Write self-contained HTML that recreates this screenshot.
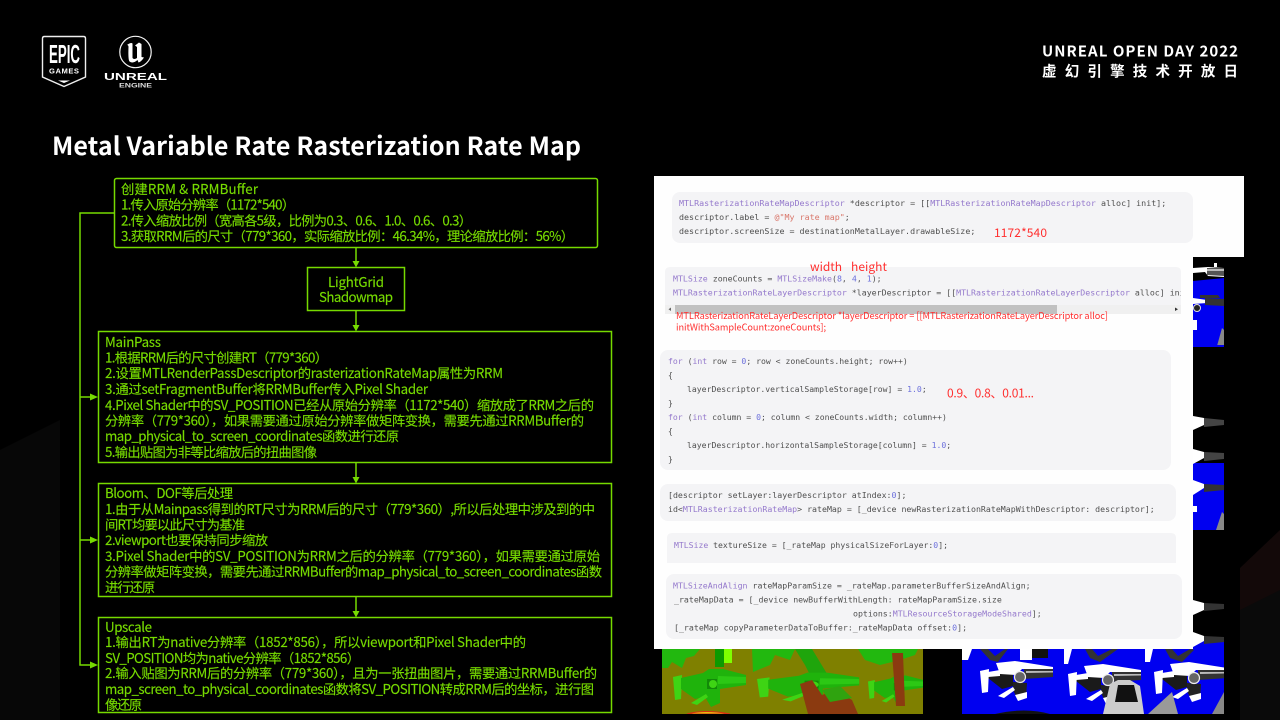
<!DOCTYPE html>
<html><head><meta charset="utf-8"><style>
html,body{margin:0;padding:0;background:#000;width:1280px;height:720px;overflow:hidden}
svg{display:block}
.g text{font-family:"Noto Sans CJK SC","Liberation Sans",sans-serif;font-size:13.3px;fill:#76da00;stroke:#76da00;stroke-width:.15px}
.c text{font-family:"DejaVu Sans Mono","Liberation Mono",monospace;fill:#4f4f4f;white-space:pre}
.p{fill:#9478cc}.n{fill:#6c70dc}.s{fill:#d9776b}
.r text{font-family:"Noto Sans CJK SC","Liberation Sans",sans-serif;fill:#ff2f2f}
</style></head><body>
<svg xmlns="http://www.w3.org/2000/svg" width="1280" height="720" viewBox="0 0 1280 720">
<defs>
<g id="ga">
<path d="M0 10L9 8L8 32L2 33Z" fill="#3ed414"/>
<path d="M8 11L30 6L36 2L50 2L73 8V18L47 22L47 36L38 40L32 30L22 32L8 22Z" fill="#1fb30c"/>
<path d="M45 9L73 10V16L45 17Z" fill="#2cc814"/>
<path d="M34 12H44V22H34Z" fill="#128a08"/>
<circle cx="40" cy="17" r="4" fill="#3ed414"/>
<path d="M18 36L33 27L35 30L24 38Z" fill="#3ed414"/>
</g>
<g id="gb">
<path d="M8 13L33 12L33 26L22 29L8 18Z" fill="#1a1a1a"/>
<path d="M0 11L9 9L8 32L2 33Z" fill="#fff"/>
<path d="M8 12L20 10V16L8 17Z" fill="#fff"/>
<path d="M16 3L35 1L73 7V10L42 9L36 15L20 14Z" fill="#fff"/>
<path d="M44 9L73 9V17L44 19Z" fill="#333"/>
<path d="M46 11L73 11V12.500L46 13Z" fill="#bbb"/>
<path d="M33 22L47 23L46 38L38 40L33 30Z" fill="#222"/>
<path d="M35 35L47 32V38L38 41Z" fill="#fff"/>
<circle cx="40" cy="17" r="5.500" fill="#666" stroke="#eee" stroke-width="1.200"/>
<path d="M18 36L33 27L35 30L24 38Z" fill="#fff"/>
</g>
</defs>
<rect width="1280" height="720" fill="#000"/>
<path d="M0 450L60 420V720H0Z" fill="#070707"/>
<path d="M1240 568L1280 530V720H1240Z" fill="#130909"/>
<path d="M1240 610L1280 590V720H1240Z" fill="#0a0a0a"/>

<!-- Epic logo -->
<path d="M44.500 36.500H83.500Q85.500 36.500 85.500 38.500V77L64 86.500L42.500 77V38.500Q42.500 36.500 44.500 36.500Z" fill="none" stroke="#eee" stroke-width="1.400"/>
<text x="49" y="63" font-family="Liberation Sans,sans-serif" font-weight="700" font-size="26" fill="#fff" textLength="31" lengthAdjust="spacingAndGlyphs">EPIC</text>
<text x="49" y="73.500" font-family="Liberation Sans,sans-serif" font-weight="700" font-size="7.600" fill="#fff" textLength="30">GAMES</text>
<path d="M58 80.500H70L64 83Z" fill="#fff"/>
<!-- Unreal logo -->
<circle cx="135.500" cy="52" r="15.700" fill="none" stroke="#f4f4f4" stroke-width="1.200"/>
<path d="M127 45Q131 42 132.500 43.500V58Q134 60 137 58V47L135 45.500L139 42.500L141.500 44V57L144 57.500Q141 62 138.500 62.500L137.500 60Q133 64 129.500 61.500Q128 60 128.500 47Q128.500 45 127 45Z" fill="#fff"/>
<text x="104" y="80" font-family="Liberation Sans,sans-serif" font-weight="700" font-size="10" fill="#fff" textLength="63" lengthAdjust="spacingAndGlyphs">UNREAL</text>
<text x="119" y="87.500" font-family="Liberation Sans,sans-serif" font-weight="700" font-size="6.500" fill="#ddd" textLength="33" lengthAdjust="spacingAndGlyphs">ENGINE</text>

<!-- Header right -->
<text x="1042" y="56.500" font-family="Noto Sans CJK SC,Liberation Sans,sans-serif" font-weight="700" font-size="15" fill="#fff" textLength="196">UNREAL OPEN DAY 2022</text>
<text x="1042" y="76.500" font-family="Noto Sans CJK SC,sans-serif" font-weight="700" font-size="14.500" fill="#fff" textLength="196">虚幻引擎技术开放日</text>

<!-- Title -->
<text x="52" y="155" font-family="Noto Sans CJK SC,Liberation Sans,sans-serif" font-weight="700" font-size="25" fill="#fff" textLength="529">Metal Variable Rate Rasterization Rate Map</text>

<!-- Flow connectors -->
<g fill="none" stroke="#76da00" stroke-width="1.500">
<rect x="114.500" y="178.500" width="483" height="69" rx="2"/>
<rect x="307.500" y="267.500" width="97" height="43"/>
<rect x="98.500" y="331.500" width="513" height="131"/>
<rect x="98.500" y="483.500" width="513" height="113"/>
<rect x="98.500" y="617.500" width="513" height="95"/>
<path d="M114 213H80V665H92M80 397H92M80 540H92M356 248V262M356 311V326M356 463V478M356 597V612"/>
</g>
<g fill="#76da00">
<path d="M352.500 261H359.500L356 267.500Z"/><path d="M352.500 325H359.500L356 331.500Z"/><path d="M352.500 477H359.500L356 483.500Z"/><path d="M352.500 611H359.500L356 617.500Z"/>
<path d="M90 393.500V400.500L98 397Z"/><path d="M90 536.500V543.500L98 540Z"/><path d="M90 661.500V668.500L98 665Z"/>
</g>
<g class="g">
<text x="121" y="194" textLength="137">创建RRM &amp; RRMBuffer</text>
<text x="121" y="209.500" textLength="174">1.传入原始分辨率（1172*540）</text>
<text x="121" y="225.500" textLength="351">2.传入缩放比例（宽高各5级，比例为0.3、0.6、1.0、0.6、0.3）</text>
<text x="121" y="241" textLength="453">3.获取RRM后的尺寸（779*360，实际缩放比例：46.34%，理论缩放比例：56%）</text>
<text x="328" y="287" textLength="56">LightGrid</text>
<text x="319" y="302" textLength="74">Shadowmap</text>

<text x="105" y="347" textLength="56">MainPass</text>
<text x="105" y="362.500" textLength="223">1.根据RRM后的尺寸创建RT（779*360）</text>
<text x="105" y="378" textLength="398">2.设置MTLRenderPassDescriptor的rasterizationRateMap属性为RRM</text>
<text x="105" y="394" textLength="323">3.通过setFragmentBuffer将RRMBuffer传入Pixel Shader</text>
<text x="105" y="410" textLength="489">4.Pixel Shader中的SV_POSITION已经从原始分辨率（1172*540）缩放成了RRM之后的</text>
<text x="105" y="425.500" textLength="479">分辨率（779*360），如果需要通过原始分辨率做矩阵变换，需要先通过RRMBuffer的</text>
<text x="105" y="441" textLength="294">map_physical_to_screen_coordinates函数进行还原</text>
<text x="105" y="457" textLength="212">5.输出贴图为非等比缩放后的扭曲图像</text>

<text x="105" y="498" textLength="128">Bloom、DOF等后处理</text>
<text x="105" y="514" textLength="490">1.由于从Mainpass得到的RT尺寸为RRM后的尺寸（779*360）,所以后处理中涉及到的中</text>
<text x="105" y="529.500" textLength="140">间RT均要以此尺寸为基准</text>
<text x="105" y="545" textLength="163">2.viewport也要保持同步缩放</text>
<text x="105" y="561" textLength="495">3.Pixel Shader中的SV_POSITION为RRM之后的分辨率（779*360），如果需要通过原始</text>
<text x="105" y="576.500" textLength="497">分辨率做矩阵变换，需要先通过RRMBuffer的map_physical_to_screen_coordinates函数</text>
<text x="105" y="592" textLength="50">进行还原</text>

<text x="105" y="632" textLength="47">Upscale</text>
<text x="105" y="647" textLength="421">1.输出RT为native分辨率（1852*856），所以viewport和Pixel Shader中的</text>
<text x="105" y="663" textLength="255">SV_POSITION均为native分辨率（1852*856）</text>
<text x="105" y="678" textLength="492">2.输入贴图为RRM后的分辨率（779*360），且为一张扭曲图片，需要通过RRMBuffer的</text>
<text x="105" y="694" textLength="489">map_screen_to_physical_coordinates函数将SV_POSITION转成RRM后的坐标，进行图</text>
<text x="105" y="709.500" textLength="37">像还原</text>
</g>

<!-- Background images: green -->
<svg x="662" y="640" width="261" height="74" viewBox="662 640 261 74">
<rect x="662" y="640" width="261" height="74" fill="#7f8000"/>
<path d="M662 649H700L694 656L686 658L682 668L672 662L668 668L662 668Z" fill="#22b80f"/>
<rect x="715" y="649" width="17" height="14" fill="#7fff00"/><rect x="715" y="649" width="9" height="18" fill="#0c9a00"/>
<path d="M752 649H795L790 660L775 655L770 665L753 672Z" fill="#22b80f"/>
<path d="M795 649H812L832 682L815 685L805 665Z" fill="#1fa50c"/>
<path d="M858 649H918L915 655L900 660L880 665L865 660Z" fill="#22b80f"/>
<use href="#ga" transform="translate(673 667)"/>
<use href="#ga" transform="translate(757 671) scale(1.400 .8)"/>
<use href="#ga" transform="translate(868 674) scale(.76 .75)"/>
<path d="M892 653L903 653L905 706L896 706Z" fill="#8b3a10"/>
<path d="M800 684L812 680L822 695L835 690L852 700L858 714H808Z" fill="#8b3a10"/>
<path d="M822 690L840 686L852 698L830 702Z" fill="#2fa30f"/>
<path d="M687 714Q705 709 730 714Z" fill="#e6c010" stroke="#d83010"/>
</svg>
<!-- Background images: blue -->
<svg x="962" y="640" width="262" height="74" viewBox="962 640 262 74">
<rect x="962" y="640" width="262" height="74" fill="#0000f0"/>
<path d="M962 649H972L968 660H962Z" fill="#fff"/>
<path d="M980 649H988L995 656L1005 649H1008L998 662L990 660Z" fill="#333"/>
<rect x="1020" y="649" width="12" height="11" fill="#fff"/><rect x="1032" y="649" width="16" height="9" fill="#111"/>
<path d="M1064 649H1072L1068 664H1064Z" fill="#fff"/>
<path d="M1085 649H1092L1098 656L1112 649H1118L1100 662L1090 658Z" fill="#333"/>
<path d="M1145 649H1153L1150 662H1145Z" fill="#fff"/>
<path d="M1165 649H1172L1178 656L1190 649H1195L1182 662L1170 658Z" fill="#333"/>
<use href="#gb" transform="translate(980 660)"/>
<use href="#gb" transform="translate(1068 663)"/>
<use href="#gb" transform="translate(1154 661)"/>
<path d="M1103 714L1110 684L1118 680H1130L1140 686L1144 714Z" fill="#ccc"/><path d="M1118 685H1134L1138 702H1115Z" fill="#111"/>
<path d="M1148 714L1172 692L1178 714Z" fill="#999"/>
<path d="M1212 714L1224 692V714Z" fill="#888"/>
<path d="M995 714Q1025 707 1050 714Z" fill="#111"/>
</svg>
<!-- Right strip -->
<path d="M1193 281L1224 278V346H1193Z" fill="#0000f0"/>
<path d="M1193 268L1208 267L1224 268V277L1208 276L1205 272L1193 273Z" fill="#fff"/>
<path d="M1207 268L1224 268V276L1207 275Z" fill="#555"/><path d="M1207 269H1224V271H1207Z" fill="#bbb"/>
<path d="M1214 263H1217V267H1214Z" fill="#fff"/>
<path d="M1200 295H1218L1220 298H1200Z" fill="#333"/>
<path d="M1193 298L1207 300V303L1193 304Z" fill="#fff"/>
<path d="M1205 298L1224 299V306L1205 305Z" fill="#333"/>
<circle cx="1197" cy="308" r="3.500" fill="#222" stroke="#ddd"/>
<path d="M1193 320H1197V330H1193Z" fill="#fff"/>
<path d="M1217 346L1222 328L1224 330V346Z" fill="#888"/>
<rect x="1193" y="345" width="31" height="2" fill="#0000f0"/>
<rect x="1193" y="463" width="31" height="67" fill="#0000f0"/>
<path d="M1193 416L1204 418V425L1193 430Z" fill="#fff"/><path d="M1204 418L1224 420V425L1204 427Z" fill="#444"/>
<path d="M1193 449L1204 452V458L1193 464Z" fill="#fff"/><path d="M1204 452L1224 453V459L1204 461Z" fill="#444"/>
<path d="M1193 480L1204 484V488L1193 495Z" fill="#fff"/><path d="M1204 484L1224 485V490L1204 492Z" fill="#333"/>
<path d="M1193 506H1197V512H1193Z" fill="#fff"/>
<path d="M1216 530L1222 512L1224 514V530Z" fill="#888"/>
<path d="M1193 600L1204 603V610L1193 615Z" fill="#fff"/><path d="M1204 603L1224 604V609L1204 611Z" fill="#333"/>
<rect x="1193" y="647" width="31" height="3" fill="#0000f0"/>
<path d="M1193 632L1204 636V641L1193 647Z" fill="#fff"/><path d="M1204 636L1224 637V642L1204 644Z" fill="#333"/>

<!-- White panel -->
<path d="M654 176H1244V257H1193V649H654Z" fill="#fefefe"/>
<g fill="#f4f4f6">
<rect x="672" y="192" width="521" height="51" rx="8"/>
<path d="M665 272Q665 267 670 267H1176Q1181 267 1181 272V314H665Z"/>
<rect x="660" y="350" width="511" height="120" rx="8"/>
<rect x="660" y="484" width="516" height="37" rx="8"/>
<path d="M667 538Q667 533 672 533H1171Q1176 533 1176 538V563H667Z"/>
<rect x="666" y="574" width="516" height="65" rx="8"/>
</g>
<rect x="665" y="305" width="516" height="9" fill="#f0f0f0"/>
<rect x="675" y="305" width="382" height="9" fill="#c1c1c1"/>
<path d="M671 307.500V311L668.500 309.200Z" fill="#666"/><path d="M1175 307.500V311L1178 309.200Z" fill="#333"/>

<g class="c">
<g font-size="8.350">
<text x="679" y="206"><tspan class="p">MTLRasterizationRateMapDescriptor</tspan> *descriptor = [[<tspan class="p">MTLRasterizationRateMapDescriptor</tspan> alloc] init];</text>
<text x="679" y="220">descriptor.label = <tspan class="s">@"My rate map"</tspan>;</text>
<text x="679" y="234">descriptor.screenSize = destinationMetalLayer.drawableSize;</text>
</g>
<svg x="665" y="267" width="516" height="38" viewBox="665 267 516 38">
<g font-size="8.250">
<text x="673" y="281.500"><tspan class="p">MTLSize</tspan> zoneCounts = <tspan class="p">MTLSizeMake</tspan>(<tspan class="n">8</tspan>, <tspan class="n">4</tspan>, <tspan class="n">1</tspan>);</text>
<text x="673" y="295.500"><tspan class="p">MTLRasterizationRateLayerDescriptor</tspan> *layerDescriptor = [[<tspan class="p">MTLRasterizationRateLayerDescriptor</tspan> alloc] init];</text>
</g>
</svg>
<g font-size="8.130">
<text x="668" y="364"><tspan class="p">for</tspan> (<tspan class="p">int</tspan> row = <tspan class="n">0</tspan>; row &lt; zoneCounts.height; row++)</text>
<text x="668" y="378">{</text>
<text x="687" y="392">layerDescriptor.verticalSampleStorage[row] = <tspan class="n">1.0</tspan>;</text>
<text x="668" y="406">}</text>
<text x="668" y="420"><tspan class="p">for</tspan> (<tspan class="p">int</tspan> column = <tspan class="n">0</tspan>; column &lt; zoneCounts.width; column++)</text>
<text x="668" y="434">{</text>
<text x="687" y="448">layerDescriptor.horizontalSampleStorage[column] = <tspan class="n">1.0</tspan>;</text>
<text x="668" y="462">}</text>
</g>
<g font-size="8.250">
<text x="668" y="498">[descriptor setLayer:layerDescriptor atIndex:<tspan class="n">0</tspan>];</text>
<text x="668" y="512">id&lt;<tspan class="p">MTLRasterizationRateMap</tspan>&gt; rateMap = [_device newRasterizationRateMapWithDescriptor: descriptor];</text>
</g>
<text x="674" y="548" font-size="8.130"><tspan class="p">MTLSize</tspan> textureSize = [_rateMap physicalSizeForLayer:<tspan class="n">0</tspan>];</text>
<g font-size="8.250">
<text x="673" y="588.500"><tspan class="p">MTLSizeAndAlign</tspan> rateMapParamSize = _rateMap.parameterBufferSizeAndAlign;</text>
<text x="674" y="602.500">_rateMapData = [_device newBufferWithLength: rateMapParamSize.size</text>
<text x="853" y="616.500">options:<tspan class="p">MTLResourceStorageModeShared</tspan>];</text>
<text x="674" y="630.500">[_rateMap copyParameterDataToBuffer:_rateMapData offset:<tspan class="n">0</tspan>];</text>
</g>
</g>

<g class="r">
<text x="810" y="271" font-size="12" textLength="32">width</text>
<text x="851" y="271" font-size="12" textLength="36">height</text>
<text x="994" y="237" font-size="12" textLength="53">1172*540</text>
<text x="676" y="319" font-size="9.200" textLength="432">MTLRasterizationRateLayerDescriptor *layerDescriptor = [[MTLRasterizationRateLayerDescriptor alloc]</text>
<text x="676" y="330.500" font-size="9.200" textLength="150">initWithSampleCount:zoneCounts];</text>
<text x="947" y="397.500" font-size="12" textLength="87">0.9、0.8、0.01...</text>
</g>
</svg>
</body></html>
